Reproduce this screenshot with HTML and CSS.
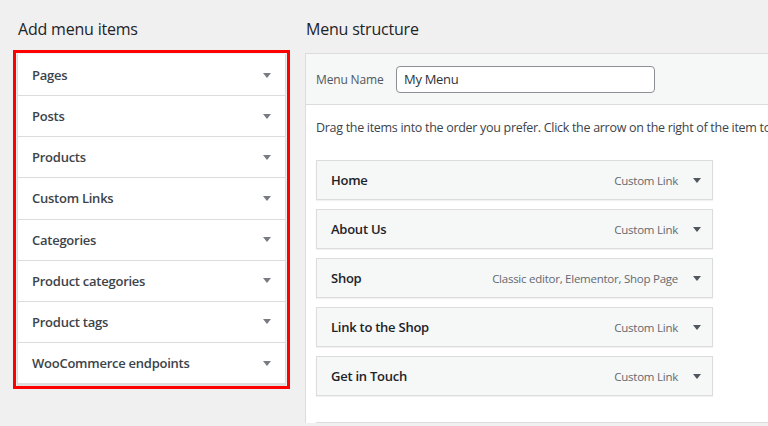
FILE: index.html
```html
<!DOCTYPE html>
<html>
<head>
<meta charset="utf-8">
<link rel="stylesheet" href="styles.css">
</head>
<body>
<div class="page">
  <section class="col-left">
    <h2 class="heading">Add menu items</h2>
    <div class="accordion">
      <div class="acc-row"><span>Pages</span><svg class="arrow" viewBox="0 0 8 5"><path d="M0 0h8L4 5z"/></svg></div>
      <div class="acc-row"><span>Posts</span><svg class="arrow" viewBox="0 0 8 5"><path d="M0 0h8L4 5z"/></svg></div>
      <div class="acc-row"><span>Products</span><svg class="arrow" viewBox="0 0 8 5"><path d="M0 0h8L4 5z"/></svg></div>
      <div class="acc-row"><span>Custom Links</span><svg class="arrow" viewBox="0 0 8 5"><path d="M0 0h8L4 5z"/></svg></div>
      <div class="acc-row"><span>Categories</span><svg class="arrow" viewBox="0 0 8 5"><path d="M0 0h8L4 5z"/></svg></div>
      <div class="acc-row"><span>Product categories</span><svg class="arrow" viewBox="0 0 8 5"><path d="M0 0h8L4 5z"/></svg></div>
      <div class="acc-row"><span>Product tags</span><svg class="arrow" viewBox="0 0 8 5"><path d="M0 0h8L4 5z"/></svg></div>
      <div class="acc-row"><span>WooCommerce endpoints</span><svg class="arrow" viewBox="0 0 8 5"><path d="M0 0h8L4 5z"/></svg></div>
    </div>
  </section>
  <section class="col-right">
    <h2 class="heading">Menu structure</h2>
    <div class="menu-panel">
      <div class="menu-header">
        <label class="menu-label">Menu Name</label>
        <div class="menu-input">My Menu</div>
      </div>
      <div class="menu-body">
        <p class="drag-text">Drag the items into the order you prefer. Click the arrow on the right of the item to reveal additional configuration options.</p>
        <ul class="items">
          <li class="item"><span class="item-title">Home</span><span class="item-type">Custom Link</span><svg class="arrow dark" viewBox="0 0 8 5"><path d="M0 0h8L4 5z"/></svg></li>
          <li class="item"><span class="item-title">About Us</span><span class="item-type">Custom Link</span><svg class="arrow dark" viewBox="0 0 8 5"><path d="M0 0h8L4 5z"/></svg></li>
          <li class="item"><span class="item-title">Shop</span><span class="item-type">Classic editor, Elementor, Shop Page</span><svg class="arrow dark" viewBox="0 0 8 5"><path d="M0 0h8L4 5z"/></svg></li>
          <li class="item"><span class="item-title">Link to the Shop</span><span class="item-type">Custom Link</span><svg class="arrow dark" viewBox="0 0 8 5"><path d="M0 0h8L4 5z"/></svg></li>
          <li class="item"><span class="item-title">Get in Touch</span><span class="item-type">Custom Link</span><svg class="arrow dark" viewBox="0 0 8 5"><path d="M0 0h8L4 5z"/></svg></li>
        </ul>
        <div class="divider"></div>
      </div>
    </div>
  </section>
</div>
</body>
</html>
```

FILE: styles.css
```css
html, body {
  margin: 0;
  padding: 0;
  background: #f0f0f1;
  overflow: hidden;
}
body {
  width: 768px;
  height: 426px;
  font-family: "Open Sans", "Noto Sans", sans-serif;
  color: #2c3338;
}
.page {
  display: flex;
  align-items: flex-start;
  gap: 19px;
  padding-left: 17px;
}
.heading {
  margin: 0;
  height: 54px;
  box-sizing: border-box;
  padding-top: 18px;
  font-size: 16px;
  line-height: 22px;
  font-weight: 400;
  color: #1d2327;
  letter-spacing: -0.2px;
}
.col-left {
  width: 269px;
  flex: none;
}
.col-left .heading {
  padding-left: 1px;
}
.accordion {
  background: #fff;
  border: 1px solid #dcdcde;
  border-top: none;
  box-shadow: 0 1px 1px rgba(0, 0, 0, 0.06);
  outline: 3px solid #ff0000;
  outline-offset: 1px;
}
.acc-row {
  height: 40.15px;
  border-bottom: 1px solid #dcdcde;
  display: flex;
  align-items: center;
  justify-content: space-between;
  padding: 0 14px 0 14px;
  font-size: 13px;
  font-weight: 600;
  color: #3c434a;
  letter-spacing: -0.25px;
}
.acc-row:first-child {
  border-top: 1px solid #fff;
}
.arrow {
  width: 8px;
  height: 5px;
  fill: #787c82;
  flex: none;
}
.arrow.dark {
  fill: #50575e;
}
.col-right {
  width: 560px;
  flex: none;
}
.col-right .heading {
  padding-left: 1px;
  height: 53px;
}
.menu-panel {
  border-left: 1px solid #dcdcde;
  border-top: 1px solid #dcdcde;
  background: #fff;
}
.menu-header {
  background: #f6f7f7;
  border-bottom: 1px solid #dcdcde;
  height: 51px;
  box-sizing: border-box;
  display: flex;
  align-items: center;
  padding-left: 10px;
  padding-top: 1px;
}
.menu-label {
  width: 80px;
  flex: none;
  font-size: 12px;
  color: #50575e;
  letter-spacing: -0.15px;
}
.menu-input {
  width: 259px;
  height: 27px;
  box-sizing: border-box;
  border: 1px solid #8c8f94;
  border-radius: 4px;
  background: #fff;
  font-size: 13px;
  line-height: 25px;
  padding-left: 7px;
  color: #2c3338;
  letter-spacing: -0.3px;
}
.menu-body {
  padding: 13px 0 0 10px;
}
.drag-text {
  margin: 0;
  font-size: 12.5px;
  line-height: 20px;
  color: #3c434a;
  white-space: nowrap;
  letter-spacing: -0.3px;
}
.items {
  list-style: none;
  margin: 22px 0 0 0;
  padding: 0;
  width: 397px;
  display: flex;
  flex-direction: column;
  gap: 9px;
}
.item {
  height: 40px;
  box-sizing: border-box;
  border: 1px solid #dcdcde;
  background: #f6f7f7;
  box-shadow: 0 1px 1px rgba(0, 0, 0, 0.05);
  display: flex;
  align-items: center;
  padding: 0 11px 0 14px;
  font-size: 13px;
}
.item-title {
  font-weight: 600;
  color: #1d2327;
  flex: 1;
  letter-spacing: -0.25px;
}
.item-type {
  color: #646970;
  margin-right: 15px;
  font-size: 11.5px;
  letter-spacing: -0.25px;
}
.divider {
  margin-top: 26px;
  border-top: 1px solid #dcdcde;
}
```
